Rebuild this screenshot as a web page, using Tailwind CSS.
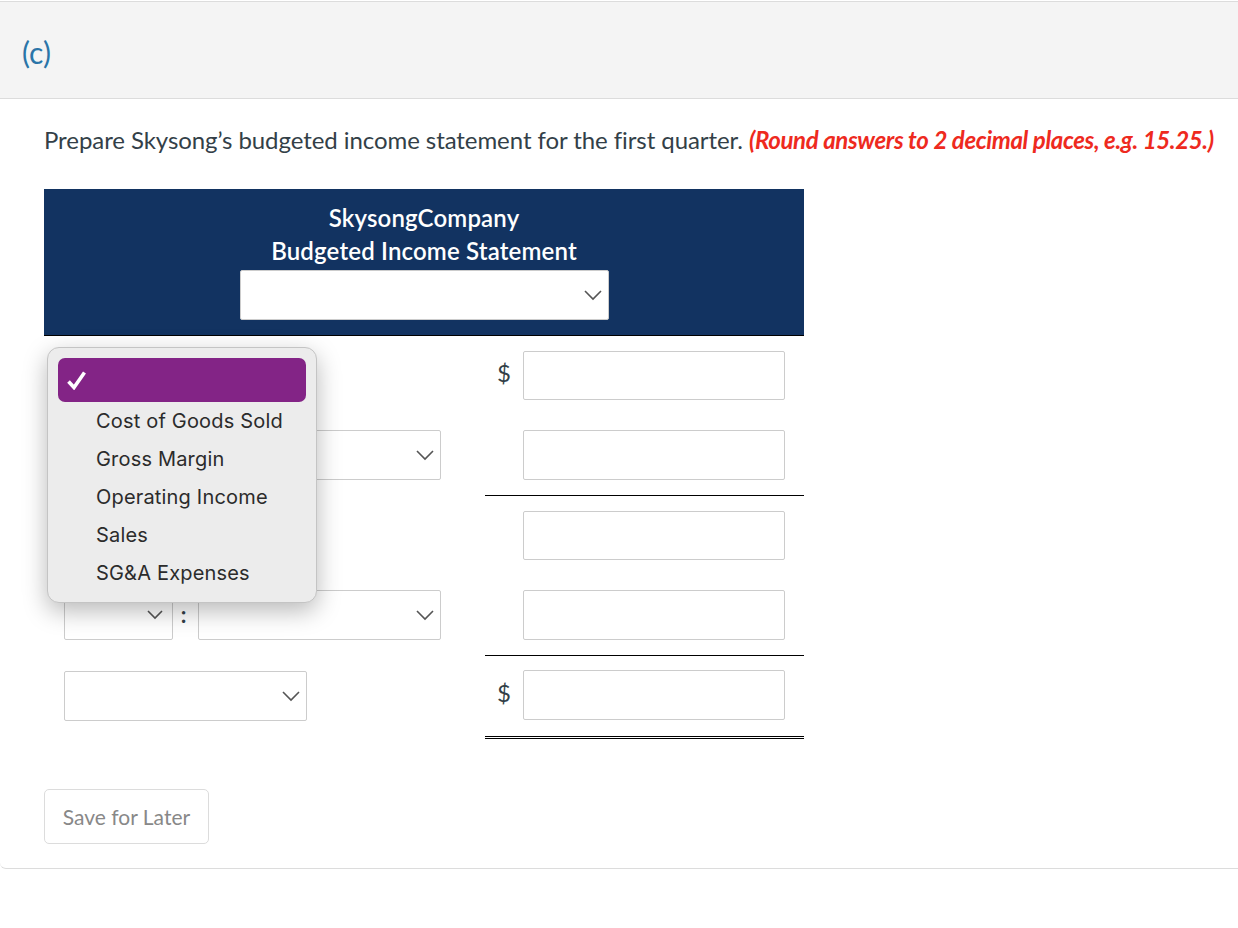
<!DOCTYPE html>
<html lang="en">
  <head>
    <meta charset="UTF-8" />
    <meta name="viewport" content="width=device-width, initial-scale=1.0" />
    <title>Budgeted Income Statement</title>
    <script src="https://cdn.jsdelivr.net/npm/@tailwindcss/browser@4"></script>
  </head>
  <body class="bg-white font-['Lato',sans-serif] text-[#333f48]">
    <div class="h-[928px] pt-px">
      <div class="h-[98px] bg-[#f4f4f4] border-y border-[#dcdcdc] pl-[22px] pt-[30px] text-[#2a75a8] text-[30px] leading-[40px]">(c)</div>

      <div class="h-[770px] border-b border-[#dcdcdc] rounded-bl-md pl-[44px] pt-[24px]">
        <p class="text-[24px] leading-[34px] whitespace-nowrap tracking-[-0.07px]">
          Prepare Skysong’s budgeted income statement for the first quarter.
          <span class="font-bold italic text-[#ee2a1e] tracking-[-0.36px]">(Round answers to 2 decimal places, e.g. 15.25.)</span>
        </p>

        <div class="relative w-[760px] mt-[32px]">
          <div class="h-[147px] bg-[#123361] border-b border-black flex flex-col items-center pt-[12px] text-white text-[24px] leading-[33px] font-semibold tracking-[0.16px]">
            <div>SkysongCompany</div>
            <div>Budgeted Income Statement</div>
            <div class="w-[369px] h-[50px] mt-[3px] bg-white border border-[#cccccc] rounded-[2px] flex items-center justify-end pr-[5px]">
              <svg class="w-[20px] h-[12px]" viewBox="0 0 20 12" fill="none" stroke="#555" stroke-width="1.6"><path d="M2 2l8 8 8-8" /></svg>
            </div>
          </div>

          <!-- row 1 -->
          <div class="grid grid-cols-[441px_319px]">
            <div class="pl-[20px] py-[15px]">
              <div class="w-[243px] h-[49px] border border-[#cccccc] rounded-[2px]"></div>
            </div>
            <div class="flex items-center py-[15px] pl-[38px]">
              <span class="w-0 ml-[-26px] mr-[26px] mb-[6px] text-[24px]">$</span>
              <div class="w-[262px] h-[49px] border border-[#cccccc] rounded-[2px]"></div>
            </div>
          </div>

          <!-- row 2 -->
          <div class="grid grid-cols-[441px_319px]">
            <div class="pl-[20px] py-[15px] flex items-start">
              <div class="w-[109px] h-[50px] border border-[#cccccc] rounded-[2px]"></div>
              <div class="w-[25px]"></div>
              <div class="w-[243px] h-[50px] border border-[#cccccc] rounded-[2px] flex items-center justify-end pr-[5px]">
                <svg class="w-[20px] h-[12px]" viewBox="0 0 20 12" fill="none" stroke="#555" stroke-width="1.6"><path d="M2 2l8 8 8-8" /></svg>
              </div>
            </div>
            <div class="py-[15px] pl-[38px] border-b border-black">
              <div class="w-[262px] h-[50px] border border-[#cccccc] rounded-[2px]"></div>
            </div>
          </div>

          <!-- row 3 -->
          <div class="grid grid-cols-[441px_319px]">
            <div class="pl-[20px] py-[15px]">
              <div class="w-[243px] h-[49px] border border-[#cccccc] rounded-[2px]"></div>
            </div>
            <div class="py-[15px] pl-[38px]">
              <div class="w-[262px] h-[49px] border border-[#cccccc] rounded-[2px]"></div>
            </div>
          </div>

          <!-- row 4 -->
          <div class="grid grid-cols-[441px_319px]">
            <div class="pl-[20px] py-[15px] flex items-start">
              <div class="w-[109px] h-[50px] border border-[#cccccc] rounded-[2px] flex items-center justify-end pr-[7px]">
                <svg class="w-[20px] h-[12px]" viewBox="0 0 20 12" fill="none" stroke="#555" stroke-width="1.6"><path d="M3 2l7 7 7-7" /></svg>
              </div>
              <div class="w-[21px] mr-[4px] text-center text-[22px] font-bold leading-[50px]">:</div>
              <div class="w-[243px] h-[50px] border border-[#cccccc] rounded-[2px] flex items-center justify-end pr-[5px]">
                <svg class="w-[20px] h-[12px]" viewBox="0 0 20 12" fill="none" stroke="#555" stroke-width="1.6"><path d="M2 2l8 8 8-8" /></svg>
              </div>
            </div>
            <div class="py-[15px] pl-[38px] border-b border-black">
              <div class="w-[262px] h-[50px] border border-[#cccccc] rounded-[2px]"></div>
            </div>
          </div>

          <!-- row 5 -->
          <div class="grid grid-cols-[441px_319px]">
            <div class="pl-[20px] pt-[15px]">
              <div class="w-[243px] h-[50px] border border-[#cccccc] rounded-[2px] flex items-center justify-end pr-[5px]">
                <svg class="w-[20px] h-[12px]" viewBox="0 0 20 12" fill="none" stroke="#555" stroke-width="1.6"><path d="M2 2l8 8 8-8" /></svg>
              </div>
            </div>
            <div class="pt-[14px] pb-[16px] pl-[38px] border-b-[3px] border-double border-black flex items-center">
              <span class="w-0 ml-[-26px] mr-[26px] mb-[4px] text-[24px]">$</span>
              <div class="w-[262px] h-[50px] border border-[#cccccc] rounded-[2px]"></div>
            </div>
          </div>

          <!-- open select menu -->
          <div class="absolute left-[3px] top-[158px] w-[270px] h-[256px] bg-[#ececec] border border-[#c4c4c4] rounded-[12px] shadow-[0_8px_24px_rgba(0,0,0,0.28)] px-[10px] pt-[10px] font-['Inter',sans-serif] text-[20px] leading-[38px] tracking-[0.18px] text-[#2b2b2b]">
            <div class="h-[44px] bg-[#832486] rounded-[7px] flex items-center pl-[9px]">
              <svg class="w-[20px] h-[20px]" viewBox="0 0 20 20" fill="none" stroke="#fff" stroke-width="3.6"><path d="M1.500 11.500l5.500 6 10.500-15" /></svg>
            </div>
            <div class="pl-[38px]">Cost of Goods Sold</div>
            <div class="pl-[38px]">Gross Margin</div>
            <div class="pl-[38px]">Operating Income</div>
            <div class="pl-[38px]">Sales</div>
            <div class="pl-[38px]">SG&amp;A Expenses</div>
          </div>
        </div>

        <button class="block mt-[50px] w-[165px] h-[55px] bg-white border border-[#dcdcdc] rounded-[5px] text-[#888888] text-[21px]">Save for Later</button>
      </div>
    </div>
  </body>
</html>
